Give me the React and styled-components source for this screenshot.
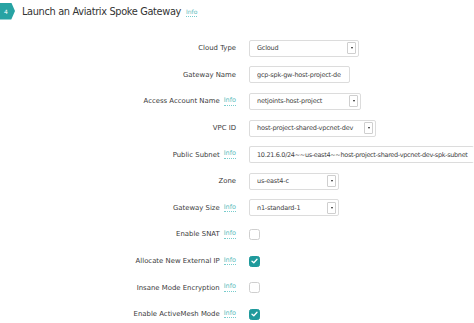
import React from "react";
import styled, { createGlobalStyle } from "styled-components";

const Global = createGlobalStyle`
  html, body { margin: 0; padding: 0; background: #fff; }
  body { font-family: "DejaVu Sans", "Open Sans", sans-serif; color: #333; overflow: hidden; }
`;

const Page = styled.div`
  width: 474px;
  height: 323px;
  overflow: hidden;
`;

const Header = styled.div`
  display: flex;
  align-items: center;
  height: 22px;
`;

const Badge = styled.div`
  width: 15px;
  height: 17px;
  background: #27a3a3;
  clip-path: polygon(0 0, 75% 0, 100% 50%, 75% 100%, 0 100%);
  color: #fff;
  font-size: 6px;
  display: flex;
  align-items: center;
  justify-content: center;
  padding-right: 3px;
  box-sizing: border-box;
`;

const Title = styled.div`
  margin-left: 7px;
  font-size: 9.8px;
  color: #333;
  letter-spacing: -0.35px;
`;

const Info = styled.span`
  color: #5bbcbc;
  font-size: ${p => p.$size || 6.5}px;
  border-bottom: 1px dotted #7cc;
  line-height: 1;
  padding-bottom: 1px;
`;

const TitleInfo = styled(Info)`
  margin-left: 5px;
  margin-top: 3px;
`;

const Form = styled.div`
  display: flex;
  flex-direction: column;
  padding-top: 13px;
`;

const Row = styled.div`
  display: grid;
  grid-template-columns: 236px 1fr;
  column-gap: 13px;
  align-items: center;
  height: 26.6px;
`;

const Label = styled.div`
  display: flex;
  justify-content: flex-end;
  align-items: center;
  gap: 4px;
  font-size: 6.9px;
  color: #3a3a3a;
  white-space: nowrap;
`;

const Field = styled.div`
  display: flex;
  align-items: center;
  box-sizing: border-box;
  width: ${p => p.$w}px;
  height: 17px;
  border: 1px solid #dcdcdc;
  border-right-color: ${p => (p.$open ? "transparent" : "#dcdcdc")};
  border-radius: 2px;
  background: #fff;
  font-size: 6.5px;
  letter-spacing: ${p => (p.$open ? -0.32 : -0.2)}px;
  color: #444;
  padding-left: 7px;
  white-space: nowrap;
  overflow: hidden;
`;

const Value = styled.span`
  flex: 1;
  overflow: hidden;
`;

const Arrow = styled.div`
  width: 7px;
  height: 10px;
  margin-right: 2px;
  border: 1px solid #cfcfcf;
  border-radius: 1px;
  display: flex;
  align-items: center;
  justify-content: center;
  flex: none;
  &::after {
    content: "";
    border-left: 1.5px solid transparent;
    border-right: 1.5px solid transparent;
    border-top: 2px solid #222;
  }
`;

const Check = styled.div`
  width: 11px;
  height: 11px;
  box-sizing: border-box;
  border-radius: 2.5px;
  border: 1px solid ${p => (p.$on ? "#1f9a9c" : "#cfcfcf")};
  background: ${p => (p.$on ? "#1f9a9c" : "#fff")};
  display: flex;
  align-items: center;
  justify-content: center;
`;

const rows = [
  { label: "Cloud Type", type: "select", value: "Gcloud", w: 110 },
  { label: "Gateway Name", type: "input", value: "gcp-spk-gw-host-project-de", w: 101 },
  { label: "Access Account Name", info: true, type: "select", value: "netjoints-host-project", w: 112 },
  { label: "VPC ID", type: "select", value: "host-project-shared-vpcnet-dev", w: 127 },
  { label: "Public Subnet", info: true, type: "input", value: "10.21.6.0/24~~us-east4~~host-project-shared-vpcnet-dev-spk-subnet", w: 225, open: true },
  { label: "Zone", type: "select", value: "us-east4-c", w: 90 },
  { label: "Gateway Size", info: true, type: "select", value: "n1-standard-1", w: 90 },
  { label: "Enable SNAT", info: true, type: "check", on: false },
  { label: "Allocate New External IP", info: true, type: "check", on: true },
  { label: "Insane Mode Encryption", info: true, type: "check", on: false },
  { label: "Enable ActiveMesh Mode", info: true, type: "check", on: true },
];

function Tick() {
  return (
    <svg width="7" height="6" viewBox="0 0 7 6">
      <path d="M1 3.2 L2.8 4.8 L6 1.2" fill="none" stroke="#fff" strokeWidth="1.3" strokeLinecap="round" strokeLinejoin="round" />
    </svg>
  );
}

export default function App() {
  return (
    <Page>
      <Global />
      <Header>
        <Badge>4</Badge>
        <Title>Launch an Aviatrix Spoke Gateway</Title>
        <TitleInfo $size={6}>Info</TitleInfo>
      </Header>
      <Form>
        {rows.map(r => (
          <Row key={r.label}>
            <Label>
              <span>{r.label}</span>
              {r.info && <Info>Info</Info>}
            </Label>
            {r.type === "check" ? (
              <Check $on={r.on}>{r.on && <Tick />}</Check>
            ) : (
              <Field $w={r.w} $open={r.open}>
                <Value>{r.value}</Value>
                {r.type === "select" && <Arrow />}
              </Field>
            )}
          </Row>
        ))}
      </Form>
    </Page>
  );
}
